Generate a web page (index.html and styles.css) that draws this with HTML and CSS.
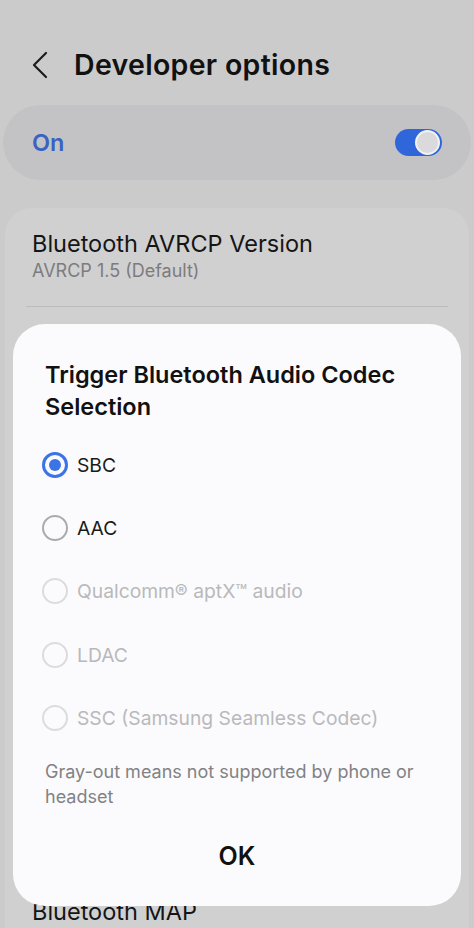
FILE: index.html
```html
<!DOCTYPE html>
<html>
<head>
<meta charset="utf-8">
<link rel="stylesheet" href="styles.css">
</head>
<body>
<div class="screen">
  <header class="header">
    <svg class="back" width="20" height="28" viewBox="0 0 20 28"><polyline points="14,2 2,14 14,26" fill="none" stroke="#1c1c1c" stroke-width="2.2" stroke-linecap="round" stroke-linejoin="round"/></svg>
    <h1 class="title">Developer options</h1>
  </header>
  <div class="master">
    <span class="master-label">On</span>
    <span class="toggle"><span class="knob"></span></span>
  </div>
  <div class="list">
    <div class="item item-first"><div class="item-title">Bluetooth AVRCP Version</div><div class="item-sub">AVRCP 1.5 (Default)</div></div>
    <div class="divider"></div>
    <div class="list-covered"></div>
    <div class="item"><div class="item-title">Bluetooth MAP</div><div class="item-sub">MAP 1.2 (Default)</div></div>
  </div>

  <div class="dialog">
    <div class="dialog-title">Trigger Bluetooth Audio Codec Selection</div>
    <div class="options">
      <div class="option"><span class="radio radio-on"></span><span class="opt-label">SBC</span></div>
      <div class="option"><span class="radio"></span><span class="opt-label">AAC</span></div>
      <div class="option disabled"><span class="radio"></span><span class="opt-label">Qualcomm® aptX™ audio</span></div>
      <div class="option disabled"><span class="radio"></span><span class="opt-label">LDAC</span></div>
      <div class="option disabled"><span class="radio"></span><span class="opt-label">SSC (Samsung Seamless Codec)</span></div>
    </div>
    <div class="note">Gray-out means not supported by phone or headset</div>
    <div class="ok">OK</div>
  </div>
</div>
</body>
</html>
```
FILE: styles.css
```css
html, body {
  margin: 0;
  padding: 0;
}
body {
  background: #cbcbcb;
  font-family: "Inter", "Roboto", "Noto Sans", sans-serif;
  color: #141414;
}
.screen {
  position: relative;
  width: 474px;
  height: 928px;
  overflow: hidden;
  background: #cbcbcb;
}
.header {
  height: 105px;
  display: flex;
  align-items: center;
  padding-left: 32px;
  box-sizing: border-box;
  padding-top: 24px;
}
.back {
  display: block;
  margin-right: 22px;
}
.title {
  margin: 0;
  font-size: 28.5px;
  font-weight: 600;
  letter-spacing: 0.3px;
  color: #111;
}
.master {
  margin: 0 3px;
  height: 75px;
  border-radius: 38px;
  background: #c3c3c5;
  display: flex;
  align-items: center;
  justify-content: space-between;
  padding: 0 29px 0 29px;
}
.master-label {
  font-size: 23.5px;
  font-weight: 600;
  color: #3a62c2;
}
.toggle {
  width: 47px;
  height: 27px;
  border-radius: 14px;
  background: #2f66da;
  display: flex;
  align-items: center;
  justify-content: flex-end;
  padding: 0 2px;
  box-sizing: border-box;
}
.knob {
  width: 21px;
  height: 21px;
  border-radius: 50%;
  background: #dadadc;
  border: 2px solid #f2f2f4;
}
.list {
  margin: 28px 5px 0;
  background: #d0d0d1;
  border-radius: 26px;
}
.item {
  padding: 21px 27px 21px;
}
.item-first {
  padding-bottom: 23px;
}
.divider {
  height: 1px;
  margin: 0 21px;
  background: #bcbcbe;
}
.list-covered {
  height: 569px;
}
.item-title {
  font-size: 23.5px;
  line-height: 30px;
  color: #151515;
  white-space: nowrap;
}
.item-sub {
  font-size: 18px;
  line-height: 24px;
  color: #7c7c7e;
}
.dialog {
  position: absolute;
  left: 13px;
  top: 324px;
  width: 448px;
  height: 582px;
  box-sizing: border-box;
  background: #fbfbfd;
  border-radius: 32px;
  padding: 35px 32px 22px;
  display: flex;
  flex-direction: column;
}
.dialog-title {
  font-size: 23.5px;
  line-height: 32px;
  font-weight: 600;
  color: #111;
  padding-right: 10px;
}
.options {
  margin-top: 10px;
  display: flex;
  flex-direction: column;
}
.option {
  height: 63.3px;
  display: flex;
  align-items: center;
}
.radio {
  width: 26px;
  height: 26px;
  box-sizing: border-box;
  border-radius: 50%;
  border: 2px solid #ababab;
  margin-left: -3px;
  margin-right: 9px;
  display: flex;
  align-items: center;
  justify-content: center;
}
.radio-on {
  border: 3px solid #3b74e6;
}
.radio-on::after {
  content: "";
  width: 12px;
  height: 12px;
  border-radius: 50%;
  background: #3b74e6;
}
.opt-label {
  font-size: 19.3px;
  color: #1a1a1a;
}
.disabled .radio {
  border-color: #dcdcde;
}
.disabled .opt-label {
  color: #b9b9bb;
}
.note {
  margin-top: 10px;
  font-size: 18px;
  line-height: 25px;
  color: #828284;
}
.ok {
  margin-top: auto;
  height: 56px;
  display: flex;
  align-items: center;
  justify-content: center;
  font-size: 25px;
  font-weight: 600;
  color: #111;
}
```
